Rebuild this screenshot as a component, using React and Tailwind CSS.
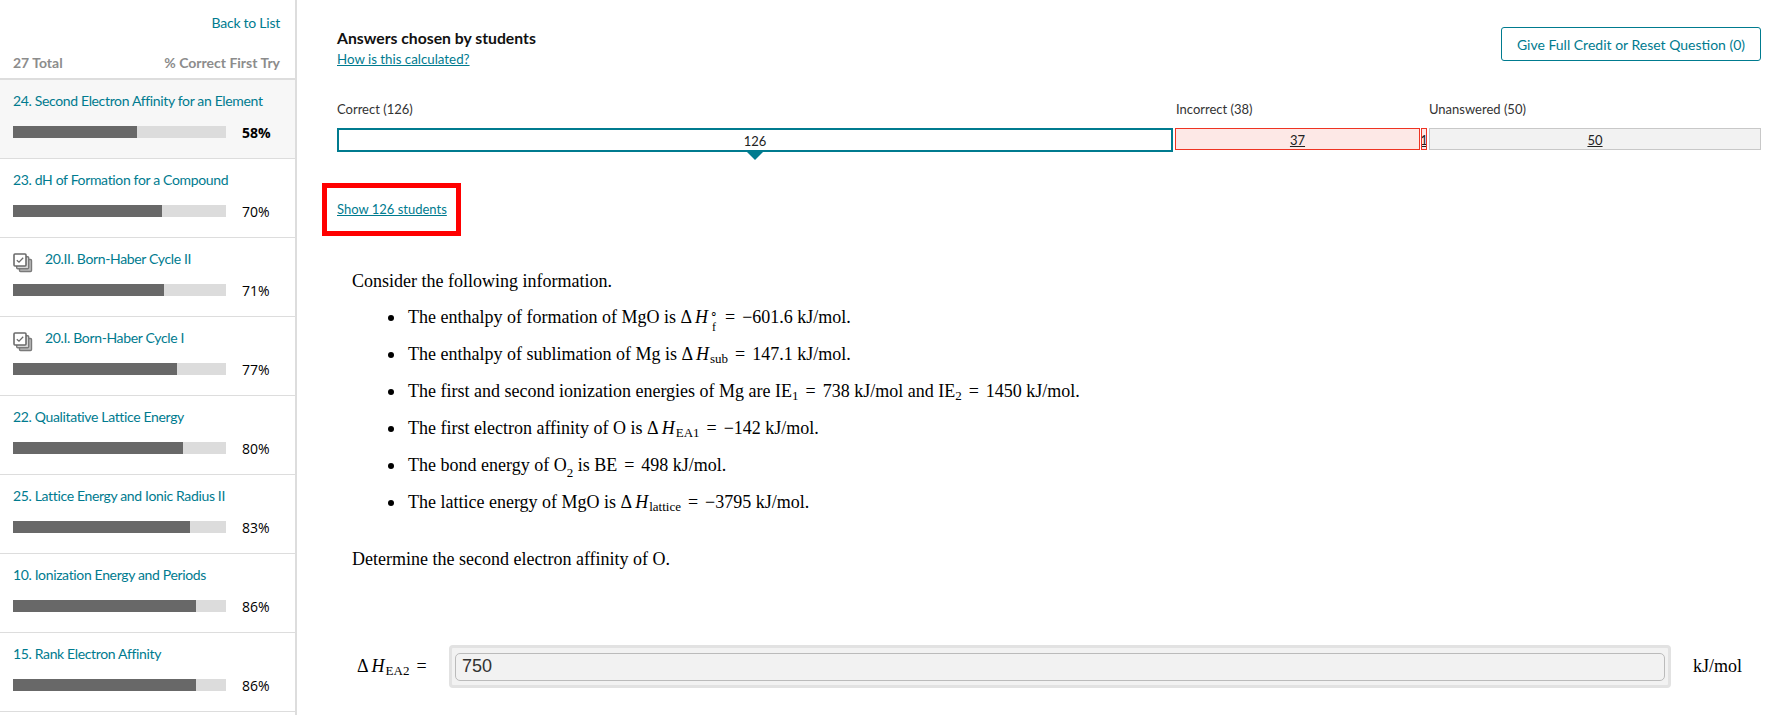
const ROWS = [
  { t: "24. Second Electron Affinity for an Element", p: 58, active: true },
  { t: "23. dH of Formation for a Compound", p: 70 },
  { t: "20.II. Born-Haber Cycle II", p: 71, icon: true },
  { t: "20.I. Born-Haber Cycle I", p: 77, icon: true },
  { t: "22. Qualitative Lattice Energy", p: 80 },
  { t: "25. Lattice Energy and Ionic Radius II", p: 83 },
  { t: "10. Ionization Energy and Periods", p: 86 },
  { t: "15. Rank Electron Affinity", p: 86 },
];

function StackIcon() {
  return (
    <svg width="20" height="20" viewBox="0 0 20 20" className="shrink-0" fill="none">
      <rect x="6.5" y="6.5" width="12" height="12" rx="1" fill="#bdbdbd" stroke="#7a7a7a" strokeWidth="1.4" />
      <rect x="3.7" y="3.7" width="12" height="12" rx="1" fill="#d6d6d6" stroke="#7a7a7a" strokeWidth="1.4" />
      <rect x="1" y="1" width="12" height="12" rx="1" fill="#ffffff" stroke="#6b6b6b" strokeWidth="1.6" />
      <path d="M3.8 7.2 L6 9.2 L10.2 4.8" stroke="#6b6b6b" strokeWidth="1.3" />
    </svg>
  );
}

function Row({ t, p, active, icon }) {
  return (
    <div className={`h-[79px] border-b border-[#dddddd] px-[13px] pt-[11px] ${active ? "bg-[#f7f7f7]" : ""}`}>
      <div className="flex h-[27px] items-start">
        {icon && <span className="mr-[12px] mt-[4px]"><StackIcon /></span>}
        <span className="whitespace-nowrap text-[14px] leading-[20px] tracking-[-0.35px] text-[#007b8f]" style={{ fontFamily: "Lato, sans-serif" }}>{t}</span>
      </div>
      <div className="mt-[8px] flex items-start">
        <div className="h-[12px] w-[213px] bg-[#dcdcdc]">
          <div className="h-full bg-[#686868]" style={{ width: `${p}%` }} />
        </div>
        <span className={`ml-[16px] text-[14px] leading-[14px] text-black ${active ? "font-bold" : ""}`}>{p}%</span>
      </div>
    </div>
  );
}

function Sub({ children, low }) {
  return <span className={`text-[13px] leading-none ${low ? "align-[-6px]" : "align-[-3px]"}`}>{children}</span>;
}
function DH() {
  return <><span className="mr-[3px]">Δ</span><i className="mr-[1px]">H</i></>;
}
function Eq({ children }) {
  return <span className="mx-[7px]">{children}</span>;
}
function Stack() {
  return (
    <span className="mb-[-14px] ml-[1px] inline-flex w-[8px] flex-col items-center align-[5px] text-[12px] leading-[13px]">
      <span>∘</span>
      <span>f</span>
    </span>
  );
}

function Bullet({ children }) {
  return (
    <li className="flex h-[37px] items-center">
      <span className="mr-[14px] h-[6px] w-[6px] shrink-0 rounded-full bg-black" />
      <span className="whitespace-nowrap">{children}</span>
    </li>
  );
}

export default function App() {
  return (
    <div className="flex h-[715px] w-[1788px] overflow-hidden bg-white" style={{ fontFamily: "'Open Sans', sans-serif" }}>
      <aside className="h-full w-[297px] shrink-0 border-r-2 border-[#dddddd]">
        <div className="h-[78px] pl-[13px] pr-[15px] pt-[13px]" style={{ fontFamily: "Lato, sans-serif" }}>
          <div className="text-right text-[14px] leading-[20px] tracking-[-0.25px] text-[#007b8f]">Back to List</div>
          <div className="mt-[20px] flex justify-between text-[14px] font-bold leading-[20px] text-[#8c8c8c]">
            <span>27 Total</span>
            <span>% Correct First Try</span>
          </div>
        </div>
        <div className="border-t-2 border-[#dddddd]">
          {ROWS.map((r) => <Row key={r.t} {...r} />)}
        </div>
      </aside>

      <main className="min-w-0 flex-1 pl-[40px] pr-[27px]">
        <div className="flex items-start justify-between pt-[26px]" style={{ fontFamily: "Lato, sans-serif" }}>
          <div>
            <div className="text-[15.75px] font-bold leading-[24px] text-[#111111]">Answers chosen by students</div>
            <a className="block text-[13.3px] leading-[18px] text-[#007b8f] underline">How is this calculated?</a>
          </div>
          <button className="mt-[1px] h-[34px] w-[260px] rounded-[3px] border border-[#007b8f] text-[14px] text-[#007b8f]">Give Full Credit or Reset Question (0)</button>
        </div>

        <div className="mt-[32px] flex text-[13px] leading-[18px] text-[#333333]" style={{ fontFamily: "Lato, sans-serif" }}>
          <span className="w-[839px]">Correct (126)</span>
          <span className="w-[253px]">Incorrect (38)</span>
          <span>Unanswered (50)</span>
        </div>

        <div className="mt-[10px] flex items-start text-[13px] text-[#222222]" style={{ fontFamily: "Lato, sans-serif" }}>
          <div className="relative flex h-[24px] w-[836px] items-center justify-center border-2 border-[#007b8f] pt-[3px]">
            126
            <span className="absolute left-1/2 top-[22px] h-0 w-0 -translate-x-1/2 border-x-[8px] border-t-[8px] border-x-transparent border-t-[#007b8f]" />
          </div>
          <div className="ml-[2px] flex h-[22px] w-[245px] items-center justify-center border border-[#ee3322] bg-[#fde8e6] pt-[3px] underline">37</div>
          <div className="ml-[1px] flex h-[22px] w-[6px] items-center justify-center overflow-hidden border border-[#ee3322] bg-[#fde8e6] pt-[3px] underline">1</div>
          <div className="ml-[2px] flex h-[22px] w-[332px] items-center justify-center border border-[#c8c8c8] bg-[#f2f2f2] pt-[3px] underline">50</div>
        </div>

        <div className="ml-[-15px] mt-[31px] flex h-[53px] w-[139px] items-center border-[5px] border-[#ff0000] pl-[10px]" style={{ fontFamily: "Lato, sans-serif" }}>
          <a className="text-[13px] text-[#007b8f] underline">Show 126 students</a>
        </div>

        <div className="pl-[15px] text-[18px] text-black" style={{ fontFamily: "'Liberation Serif', serif" }}>
          <p className="mt-[33px] leading-[24px]">Consider the following information.</p>
          <ul className="ml-[36px] mt-[6px]">
            <Bullet>The enthalpy of formation of MgO is <DH /><Stack /><Eq>=</Eq>−601.6 kJ/mol.</Bullet>
            <Bullet>The enthalpy of sublimation of Mg is <DH /><Sub>sub</Sub><Eq>=</Eq>147.1 kJ/mol.</Bullet>
            <Bullet>The first and second ionization energies of Mg are IE<Sub>1</Sub><Eq>=</Eq>738 kJ/mol and IE<Sub>2</Sub><Eq>=</Eq>1450 kJ/mol.</Bullet>
            <Bullet>The first electron affinity of O is <DH /><Sub>EA1</Sub><Eq>=</Eq>−142 kJ/mol.</Bullet>
            <Bullet>The bond energy of O<Sub low>2</Sub> is BE<Eq>=</Eq>498 kJ/mol.</Bullet>
            <Bullet>The lattice energy of MgO is <DH /><Sub>lattice</Sub><Eq>=</Eq>−3795 kJ/mol.</Bullet>
          </ul>
          <p className="mt-[26px] leading-[24px]">Determine the second electron affinity of O.</p>
          <div className="mt-[74px] flex items-center">
            <span className="w-[97px] shrink-0 whitespace-nowrap pl-[5px]"><DH /><Sub>EA2</Sub><Eq>=</Eq></span>
            <div className="flex h-[43px] w-[1222px] shrink-0 items-center rounded-[4px] border-[3px] border-[#e2e2e2] bg-[#f2f2f2] px-[3px]">
              <div className="flex h-[28px] w-full items-center rounded-[5px] border border-[#bbbbbb] pl-[6px] text-[18px] text-[#333333]" style={{ fontFamily: "'Liberation Sans', sans-serif" }}>750</div>
            </div>
            <span className="ml-[22px] whitespace-nowrap">kJ/mol</span>
          </div>
        </div>
      </main>
    </div>
  );
}
